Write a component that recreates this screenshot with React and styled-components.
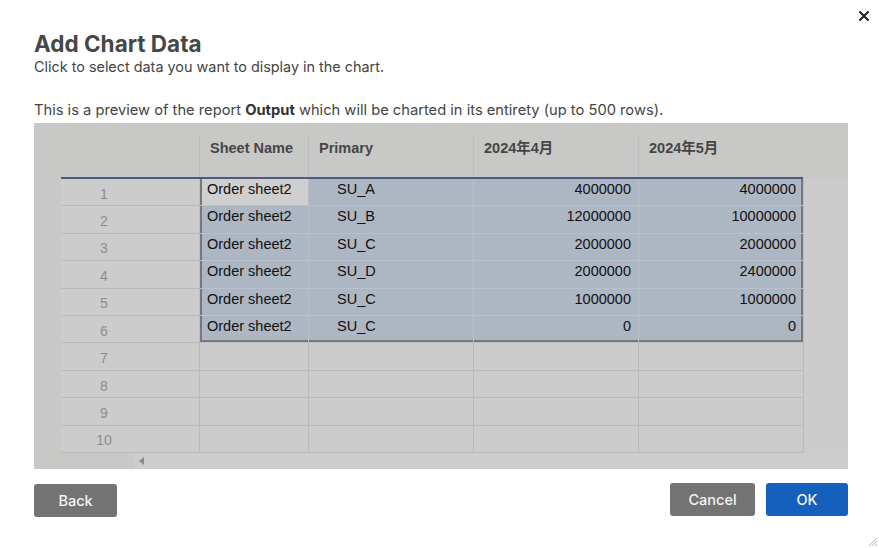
import React from "react";
import styled, { createGlobalStyle } from "styled-components";

const Global = createGlobalStyle`
  html, body { margin: 0; padding: 0; background: #fff; }
  * { box-sizing: border-box; }
`;

const Dialog = styled.div`
  position: relative;
  width: 879px;
  height: 548px;
  background: #fff;
  padding: 30px 31px 0 34px;
  font-family: Inter, "Noto Sans", sans-serif;
  color: #444;
`;

const CloseButton = styled.button`
  position: absolute;
  top: 9px;
  right: 8px;
  width: 14px;
  height: 14px;
  padding: 0;
  border: 0;
  background: none;
  display: flex;
  align-items: center;
  justify-content: center;
  cursor: pointer;
`;

const Grip = styled.svg`
  position: absolute;
  right: 1px;
  bottom: 1px;
`;

const Title = styled.h2`
  margin: 0;
  font-size: 22.5px;
  line-height: 27px;
  font-weight: 700;
  color: #474747;
`;

const Sub = styled.p`
  margin: 0;
  font-size: 14.4px;
  line-height: 20px;
  color: #444;
`;

const Preview = styled(Sub)`
  margin-top: 23px;
  font-size: 14.7px;
  b { font-weight: 700; color: #333; }
`;

const Sheet = styled.div`
  margin-top: 3px;
  width: 814px;
  height: 346px;
  background: #cccccc;
  display: flex;
  flex-direction: column;
  font-family: "Liberation Sans", Arial, "Noto Sans CJK JP", sans-serif;
  overflow: hidden;
`;

const HeaderBand = styled.div`
  display: flex;
  height: 54px;
  padding-top: 13px;
  background: #c8c8c6;
`;

const Gutter = styled.div`
  flex: 0 0 27px;
  background: #c8c8c7;
`;

const Corner = styled.div`
  flex: 0 0 138px;
`;

const HeadCell = styled.div`
  flex: 0 0 ${(p) => p.$w}px;
  border-left: 1px solid #bcbcbc;
  padding: 3px 0 0 10px;
  font-size: 14.5px;
  line-height: 18px;
  font-weight: 700;
  color: #464646;
`;

const BlueLine = styled.div`
  display: flex;
  height: 2px;
  background: #c8c8c7;
`;

const BlueBar = styled.div`
  width: 742px;
  margin-left: 27px;
  background: #4b5a82;
`;

const Row = styled.div`
  display: flex;
  height: 27.5px;
`;

const RowHead = styled.div`
  flex: 0 0 138px;
  border-bottom: 1px solid #bababa;
  display: flex;
  align-items: center;
  font-size: 14px;
  color: #8c8c8c;
  padding-top: 3px;
  span { width: 86px; text-align: center; }
`;

const Cell = styled.div`
  flex: 0 0 ${(p) => p.$w}px;
  border-left: 1px solid ${(p) => (p.$sel ? "#b9c0ca" : "#bababa")};
  border-bottom: 1px solid ${(p) => (p.$sel ? "#b9c0ca" : "#bababa")};
  background: ${(p) => (p.$active ? "#cfcfcf" : p.$sel ? "#adb6c3" : "transparent")};
  font-size: 14.5px;
  line-height: 18px;
  color: #111;
  padding: 1px ${(p) => (p.$right ? 7 : 0)}px 0 ${(p) => p.$pl}px;
  text-align: ${(p) => (p.$right ? "right" : "left")};
  white-space: nowrap;
  box-shadow: ${(p) =>
    [
      p.$edgeL && "inset 2px 0 0 #787878",
      p.$edgeR && "inset -2px 0 0 #787878",
      p.$edgeB && "inset 0 -2px 0 #787878",
    ]
      .filter(Boolean)
      .join(", ") || "none"};
`;

const EndLine = styled.div`
  flex: 0 0 1px;
  background: #bababa;
`;

const ScrollRow = styled.div`
  display: flex;
  height: 16px;
  margin-top: auto;
`;

const ScrollLeft = styled.div`
  flex: 0 0 100px;
  background: #c8c8c7;
`;

const ScrollTrack = styled.div`
  flex: 1;
  background: #cdcdcd;
  display: flex;
  align-items: center;
  padding-left: 5px;
`;

const Footer = styled.div`
  margin-top: 14px;
  width: 814px;
  display: flex;
  align-items: flex-start;
  justify-content: space-between;
`;

const Group = styled.div`
  display: flex;
  gap: 11px;
`;

const Button = styled.button`
  height: 33px;
  width: ${(p) => p.$w}px;
  margin-top: ${(p) => p.$mt || 0}px;
  border: 0;
  border-radius: 3px;
  background: ${(p) => (p.$primary ? "#1560bd" : "#737373")};
  color: #f4f4f4;
  font-family: Inter, "Noto Sans", sans-serif;
  font-size: 14.5px;
  font-weight: 500;
  cursor: pointer;
`;

const cols = [
  { key: "sheet", label: "Sheet Name", w: 109, pl: 7 },
  { key: "primary", label: "Primary", w: 165, pl: 28 },
  { key: "apr", label: "2024年4月", w: 165, right: true },
  { key: "may", label: "2024年5月", w: 165, right: true },
];

const data = [
  ["Order sheet2", "SU_A", "4000000", "4000000"],
  ["Order sheet2", "SU_B", "12000000", "10000000"],
  ["Order sheet2", "SU_C", "2000000", "2000000"],
  ["Order sheet2", "SU_D", "2000000", "2400000"],
  ["Order sheet2", "SU_C", "1000000", "1000000"],
  ["Order sheet2", "SU_C", "0", "0"],
];

export default function App() {
  const rows = Array.from({ length: 10 }, (_, i) => data[i] || null);
  return (
    <>
      <Global />
      <Dialog>
        <CloseButton aria-label="Close">
          <svg width="10" height="10" viewBox="0 0 10 10">
            <path d="M1 1 L9 9 M9 1 L1 9" stroke="#222" strokeWidth="2" strokeLinecap="square" />
          </svg>
        </CloseButton>
        <Title>Add Chart Data</Title>
        <Sub>Click to select data you want to display in the chart.</Sub>
        <Preview>
          This is a preview of the report <b>Output</b> which will be charted in its entirety (up to 500 rows).
        </Preview>
        <Sheet>
          <HeaderBand>
            <Gutter />
            <Corner />
            {cols.map((c) => (
              <HeadCell key={c.key} $w={c.w}>
                {c.label}
              </HeadCell>
            ))}
          </HeaderBand>
          <BlueLine>
            <BlueBar />
          </BlueLine>
          {rows.map((r, i) => {
            const sel = !!r;
            const last = i === data.length - 1;
            return (
              <Row key={i}>
                <Gutter />
                <RowHead>
                  <span>{i + 1}</span>
                </RowHead>
                {cols.map((c, j) => (
                  <Cell
                    key={c.key}
                    $w={c.w}
                    $pl={c.pl || 0}
                    $right={c.right}
                    $sel={sel}
                    $active={i === 0 && j === 0}
                    $edgeL={sel && j === 0}
                    $edgeR={sel && j === cols.length - 1}
                    $edgeB={sel && last}
                  >
                    {r ? r[j] : ""}
                  </Cell>
                ))}
                <EndLine />
              </Row>
            );
          })}
          <ScrollRow>
            <ScrollLeft />
            <ScrollTrack>
              <svg width="6" height="8" viewBox="0 0 6 8">
                <path d="M5 0 L0 4 L5 8 Z" fill="#8a8a8a" />
              </svg>
            </ScrollTrack>
          </ScrollRow>
        </Sheet>
        <Footer>
          <Button $w={83} $mt={1}>Back</Button>
          <Group>
            <Button $w={85}>Cancel</Button>
            <Button $w={82} $primary>OK</Button>
          </Group>
        </Footer>
        <Grip width="10" height="10" viewBox="0 0 10 10">
          <path d="M9 1 L1 9 M9 4 L4 9 M9 7 L7 9" stroke="#b5b5b5" strokeWidth="1" />
        </Grip>
      </Dialog>
    </>
  );
}
